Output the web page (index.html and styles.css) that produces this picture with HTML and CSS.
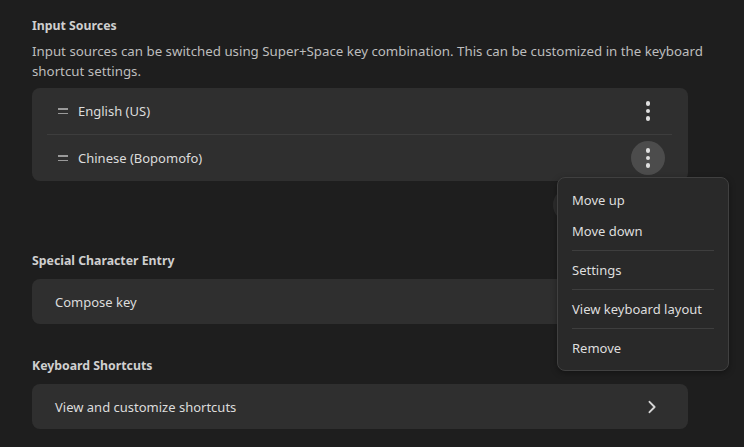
FILE: index.html
```html
<!DOCTYPE html>
<html>
<head>
<meta charset="utf-8">
<link rel="stylesheet" href="styles.css">
</head>
<body>
<div class="page">
  <h2 class="heading first">Input Sources</h2>
  <p class="desc">Input sources can be switched using Super+Space key combination. This can be customized in the keyboard<br>shortcut settings.</p>
  <div class="card">
    <div class="row source">
      <span class="handle"><i></i><i></i></span>
      <span class="label">English (US)</span>
      <span class="kebab"><i></i><i></i><i></i></span>
    </div>
    <div class="sep"></div>
    <div class="row source">
      <span class="handle"><i></i><i></i></span>
      <span class="label">Chinese (Bopomofo)</span>
      <span class="kebab hover"><i></i><i></i><i></i></span>
    </div>
  </div>
  <div class="addrow"><span class="addbtn"></span></div>
  <h2 class="heading">Special Character Entry</h2>
  <div class="card">
    <div class="row plain"><span class="label">Compose key</span></div>
  </div>
  <h2 class="heading">Keyboard Shortcuts</h2>
  <div class="card">
    <div class="row plain">
      <span class="label">View and customize shortcuts</span>
      <svg class="chev" width="12" height="14" viewBox="0 0 12 14"><path d="M3.5 1.8 L8.6 7 L3.5 12.2" fill="none" stroke="#d6d6d6" stroke-width="1.9" stroke-linecap="round" stroke-linejoin="round"/></svg>
    </div>
  </div>
</div>
<div class="menu">
  <div class="item">Move up</div>
  <div class="item">Move down</div>
  <div class="msep"></div>
  <div class="item">Settings</div>
  <div class="msep"></div>
  <div class="item">View keyboard layout</div>
  <div class="msep"></div>
  <div class="item">Remove</div>
</div>
</body>
</html>
```
FILE: styles.css
```css
html, body {
  margin: 0;
  padding: 0;
  background: #1e1e1e;
  width: 744px;
  height: 447px;
  overflow: hidden;
  font-family: "Noto Sans", "Open Sans", sans-serif;
  color: #dadada;
}
.page {
  width: 656px;
  margin-left: 32px;
  display: flex;
  flex-direction: column;
}
.heading {
  margin: 0;
  font-size: 12.3px;
  font-weight: 700;
  line-height: 18px;
  color: #cfcfcf;
}
.heading.first { margin-top: 17px; }
.desc {
  flex: none;
  margin: 6px 0 0 0;
  font-size: 13.3px;
  line-height: 20px;
  color: #bdbdbd;
  width: 712px;
  white-space: nowrap;
}
.card {
  background: #2f2f2f;
  border-radius: 8px;
  display: flex;
  flex-direction: column;
}
.desc + .card { margin-top: 7px; }
.row {
  height: 46px;
  display: flex;
  align-items: center;
  font-size: 13px;
  color: #dcdcdc;
}
.row.source { padding-left: 26px; padding-right: 23px; }
.row.plain { padding-left: 23px; padding-right: 30px; height: 45px; }
.row .label { flex: 1; }
.handle {
  width: 10px;
  display: flex;
  flex-direction: column;
  gap: 3px;
  margin-right: 10px;
}
.handle i {
  display: block;
  height: 1.6px;
  background: #9a9a9a;
}
.sep {
  height: 1px;
  background: #3d3d3d;
  margin: 0 16px 0 15px;
}
.kebab {
  width: 34px;
  height: 34px;
  border-radius: 50%;
  display: flex;
  flex-direction: column;
  align-items: center;
  justify-content: center;
  gap: 3px;
}
.kebab i {
  display: block;
  width: 4.4px;
  height: 4.4px;
  border-radius: 50%;
  background: #e0e0e0;
}
.kebab.hover { background: #4c4c4c; }
.addrow {
  height: 71px;
  position: relative;
}
.addbtn {
  position: absolute;
  left: 521px;
  top: 7px;
  width: 34px;
  height: 34px;
  border-radius: 50%;
  background: #2d2d2d;
}
.card + .heading { margin-top: 33px; }
.chev { display: block; }
.heading + .card { margin-top: 9px; }
.menu {
  position: absolute;
  left: 557px;
  top: 177px;
  width: 172px;
  height: 194px;
  box-sizing: border-box;
  background: #292929;
  border: 1px solid #404040;
  border-radius: 8px;
  padding: 7px 14px 0 14px;
  box-shadow: 0 2px 6px rgba(0,0,0,0.35);
}
.item {
  height: 30px;
  line-height: 30px;
  font-size: 13px;
  color: #dedede;
}
.msep {
  height: 1px;
  background: #3e3e3e;
  margin: 4px 0 4px 0;
}
.item:first-child { height: 31px; line-height: 31px; }
```
